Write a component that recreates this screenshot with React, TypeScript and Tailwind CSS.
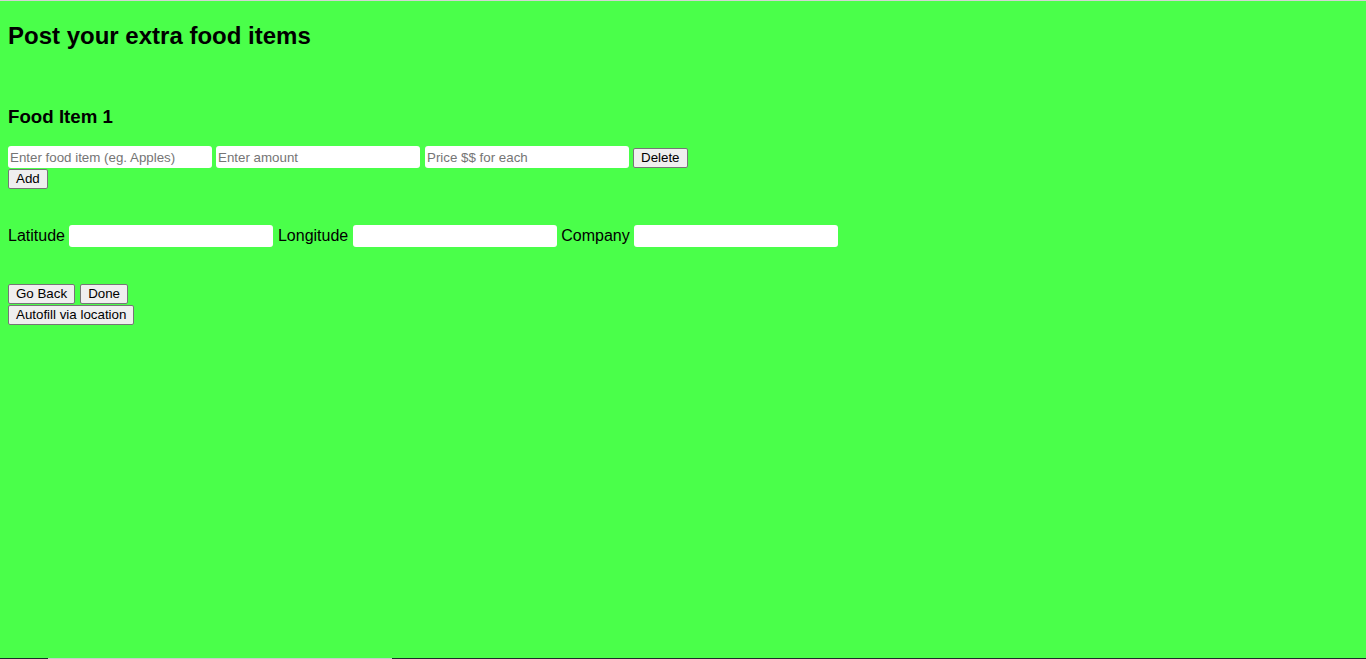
const inputCls =
  'w-[204px] h-[22px] bg-white rounded-[3px] px-[2px] text-[13.33px] text-black placeholder:text-[#757575] outline-none';
const btnCls =
  'h-[20px] px-[7px] bg-[#efefef] border border-[#767676] rounded-[2px] text-[13.33px] leading-none text-black';

export default function App() {
  return (
    <div className="w-[1366px] h-[659px] bg-[#4aff4a] flex flex-col font-['Liberation_Sans',Arial,sans-serif] text-black overflow-hidden">
      <div className="h-px bg-[#d4d4d4]" />
      <div className="flex-1 px-2 flex flex-col items-start">
        <h2 className="mt-[21px] text-[24px] font-bold leading-[28px]">Post your extra food items</h2>

        <h3 className="mt-[56px] text-[18.72px] font-bold leading-[22px]">Food Item 1</h3>

        <div className="mt-[18px] flex items-center">
          <input className={inputCls} placeholder="Enter food item (eg. Apples)" />
          <input className={`${inputCls} ml-[4px]`} placeholder="Enter amount" />
          <input className={`${inputCls} ml-[5px]`} placeholder="Price $$ for each" />
          <button className={`${btnCls} ml-[4px] mt-[1px]`}>Delete</button>
        </div>
        <button className={`${btnCls} mt-px`}>Add</button>

        <div className="mt-[35px] flex items-center text-[16px]">
          <span>Latitude</span>
          <input className={`${inputCls} ml-[4px]`} />
          <span className="ml-[5px]">Longitude</span>
          <input className={`${inputCls} ml-[5px]`} />
          <span className="ml-[4px]">Company</span>
          <input className={`${inputCls} ml-[4px]`} />
        </div>

        <div className="mt-[36px] flex gap-[5px]">
          <button className={btnCls}>Go Back</button>
          <button className={btnCls}>Done</button>
        </div>
        <button className={`${btnCls} mt-px`}>Autofill via location</button>
      </div>
      <div className="h-px flex">
        <div className="w-[48px] bg-[#1f2a2a]" />
        <div className="w-[344px] bg-[#c8c8c8]" />
        <div className="flex-1 bg-[#1f2a2a]" />
      </div>
    </div>
  );
}
